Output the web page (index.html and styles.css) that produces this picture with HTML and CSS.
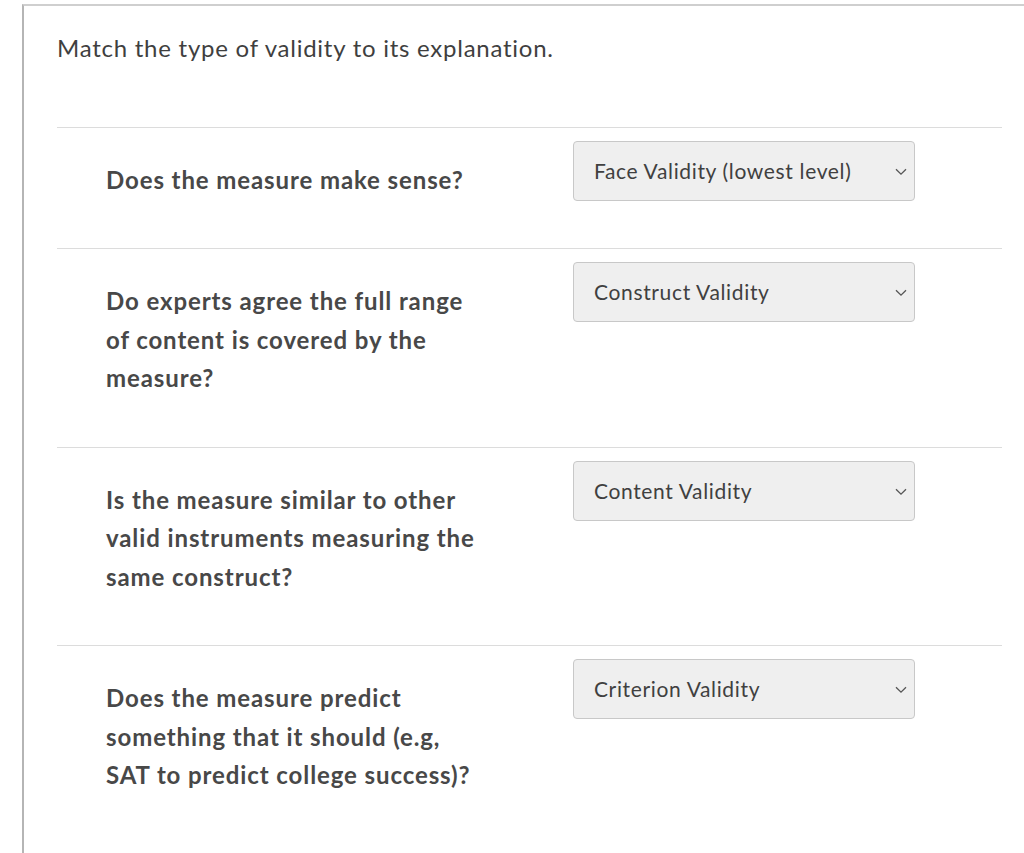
FILE: index.html
```html
<!DOCTYPE html>
<html>
<head>
<meta charset="utf-8">
<link rel="stylesheet" href="styles.css">
</head>
<body>
<div class="page">
  <div class="content">
    <div class="question-text">Match the type of validity to its explanation.</div>
    <div class="matches">
      <div class="row">
        <div class="prompt">Does the measure make sense?</div>
        <div class="select"><span>Face Validity (lowest level)</span><svg class="chev" viewBox="0 0 12 8" width="12" height="8"><path d="M1 1.2 L6 6.2 L11 1.2" fill="none" stroke="#555" stroke-width="1.3"/></svg></div>
      </div>
      <div class="row">
        <div class="prompt">Do experts agree the full range of content is covered by the measure?</div>
        <div class="select"><span>Construct Validity</span><svg class="chev" viewBox="0 0 12 8" width="12" height="8"><path d="M1 1.2 L6 6.2 L11 1.2" fill="none" stroke="#555" stroke-width="1.3"/></svg></div>
      </div>
      <div class="row">
        <div class="prompt">Is the measure similar to other valid instruments measuring the same construct?</div>
        <div class="select"><span>Content Validity</span><svg class="chev" viewBox="0 0 12 8" width="12" height="8"><path d="M1 1.2 L6 6.2 L11 1.2" fill="none" stroke="#555" stroke-width="1.3"/></svg></div>
      </div>
      <div class="row">
        <div class="prompt">Does the measure predict something that it should (e.g, SAT to predict college success)?</div>
        <div class="select"><span>Criterion Validity</span><svg class="chev" viewBox="0 0 12 8" width="12" height="8"><path d="M1 1.2 L6 6.2 L11 1.2" fill="none" stroke="#555" stroke-width="1.3"/></svg></div>
      </div>
    </div>
  </div>
</div>
</body>
</html>
```
FILE: styles.css
```css
html, body {
  margin: 0;
  padding: 0;
  background: #fff;
}
body {
  font-family: Lato, "Liberation Sans", sans-serif;
  color: #444;
}
.page {
  height: 853px;
  padding-top: 4px;
  box-sizing: border-box;
  overflow: hidden;
}
.content {
  border-top: 2px solid #cfcfcf;
  border-left: 2px solid #b5b5b5;
  margin-left: 22px;
  height: 100%;
  box-sizing: border-box;
  padding: 0 22px 0 33px;
}
.question-text {
  font-size: 24px;
  letter-spacing: 0.75px;
  line-height: 30px;
  color: #3f3f3f;
  padding-top: 27px;
  height: 94px;
  box-sizing: border-box;
  margin-bottom: 27px;
}
.row {
  border-top: 1px solid #dcdcdc;
  display: flex;
  align-items: flex-start;
  padding-top: 13px;
}
.prompt {
  width: 374px;
  margin-left: 49px;
  margin-right: 93px;
  margin-top: 20px;
  margin-bottom: 48.7px;
  font-size: 24px;
  letter-spacing: 0.9px;
  font-weight: 700;
  line-height: 38.6px;
  color: #484848;
}
.select {
  width: 342px;
  height: 60px;
  box-sizing: border-box;
  border: 1px solid #c8c8c8;
  border-radius: 4px;
  background: #efefef;
  display: flex;
  align-items: flex-start;
  justify-content: space-between;
  padding: 16px 7px 0 20px;
  font-size: 21px;
  letter-spacing: 0.65px;
  line-height: 26px;
  color: #404040;
}
.chev {
  margin-top: 10px;
}
```
